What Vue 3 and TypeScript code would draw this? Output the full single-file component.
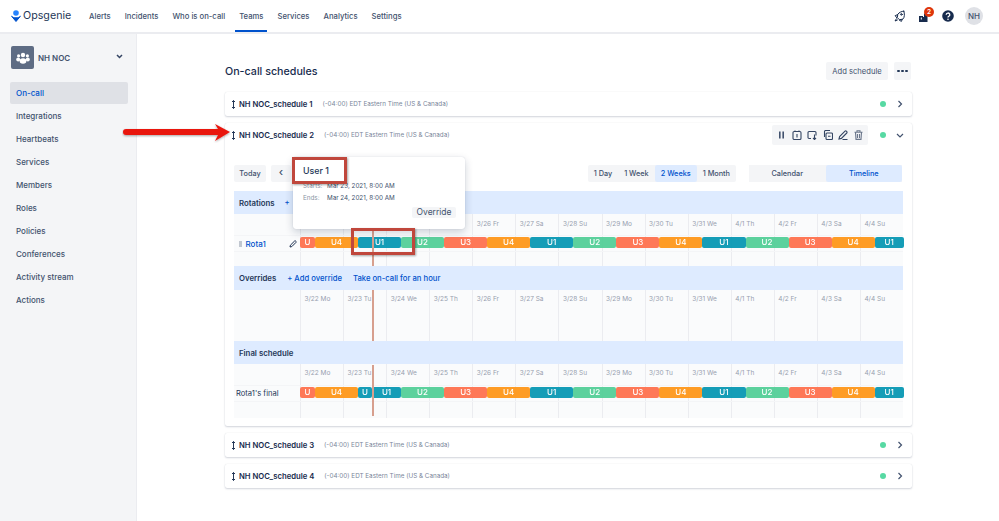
<script setup lang="ts">
const navItems = ['Alerts', 'Incidents', 'Who is on-call', 'Teams', 'Services', 'Analytics', 'Settings']
const sideItems = ['On-call', 'Integrations', 'Heartbeats', 'Services', 'Members', 'Roles', 'Policies', 'Conferences', 'Activity stream', 'Actions']
const days = ['3/22 Mo', '3/23 Tu', '3/24 We', '3/25 Th', '3/26 Fr', '3/27 Sa', '3/28 Su', '3/29 Mo', '3/30 Tu', '3/31 We', '4/1 Th', '4/2 Fr', '4/3 Sa', '4/4 Su']
const tz = '(-04:00) EDT Eastern Time (US & Canada)'
interface Bar { label: string; color: string; width: number }
const c: Record<string, string> = { U1: '#0e9ab5', U2: '#57d09a', U3: '#ff7452', U4: '#ff991f' }
const tail = (): Bar[] => ['U2', 'U3', 'U4', 'U1', 'U2', 'U3', 'U4', 'U1', 'U2', 'U3', 'U4'].map((u) => ({ label: u, color: c[u], width: 43.07 }))
const rota: Bar[] = [
  { label: 'U', color: c.U3, width: 15 },
  { label: 'U4', color: c.U4, width: 43 },
  { label: 'U1', color: c.U1, width: 43 },
  ...tail(),
  { label: 'U1', color: c.U1, width: 29 },
]
const final: Bar[] = [
  { label: 'U', color: c.U3, width: 15 },
  { label: 'U4', color: c.U4, width: 43 },
  { label: 'U', color: c.U1, width: 14 },
  { label: 'U1', color: c.U1, width: 29 },
  ...tail(),
  { label: 'U1', color: c.U1, width: 29 },
]
</script>

<template>
  <div class="page">
    <header class="topbar">
      <div class="logo">
        <svg width="10" height="12" viewBox="0 0 10 12"><circle cx="5" cy="3" r="2.800" fill="#2684ff" /><path d="M.6 6.200 5 11.500 9.400 6.200 C8 7.600 6.800 7.800 5 7.800 S2 7.600 .6 6.200Z" fill="#0052cc" stroke="#0052cc" stroke-width="1" stroke-linejoin="round" /></svg>
        <span>Opsgenie</span>
      </div>
      <nav class="nav">
        <span v-for="n in navItems" :key="n" class="nav-item" :class="{ active: n === 'Teams' }">{{ n }}</span>
      </nav>
      <div class="top-icons">
        <svg width="11" height="12" viewBox="0 0 11 12" fill="none" stroke="#172b4d" stroke-width="1" stroke-linejoin="round" stroke-linecap="round"><path d="M9.800 1.200C7.500 1.300 5.200 2.300 3.800 4.300L3.300 7.600 5.400 9.700 8.700 9.200C10.700 7.800 10.800 3.500 9.800 1.200Z" /><path d="M3.600 4.700 1.200 5.600 2.600 7.600M8.200 9.400 7.400 11.400 5.400 10.200M2.400 8.800 1 11 3.400 10" /><circle cx="7.400" cy="4.400" r=".8" /></svg>
        <div class="notif">
          <svg width="9" height="10" viewBox="0 0 9 10"><path d="M0 4h4v1h1V1.500h3.500V10H0z" fill="#172b4d" /><path d="M1.800 5.500v2h1v-2z" fill="#fff" /></svg>
          <span class="badge">2</span>
        </div>
        <svg width="12" height="12" viewBox="0 0 12 12"><circle cx="6" cy="6" r="5.800" fill="#172b4d" /><path d="M4.200 4.700A1.800 1.700 0 1 1 6.700 6.300C6.100 6.700 6 7 6 7.500" fill="none" stroke="#fff" stroke-width="1.300" /><circle cx="6" cy="9.200" r=".8" fill="#fff" /></svg>
        <div class="avatar">NH</div>
      </div>
    </header>

    <div class="body">
      <aside class="sidebar">
        <div class="team">
          <div class="team-icon">
            <svg width="14" height="12" viewBox="0 0 14 12" fill="#fff"><circle cx="7" cy="3" r="2.200" /><circle cx="2.600" cy="3.800" r="1.600" /><circle cx="11.400" cy="3.800" r="1.600" /><ellipse cx="7" cy="9" rx="3.400" ry="2.800" /><ellipse cx="2.200" cy="7.600" rx="2" ry="2" /><ellipse cx="11.800" cy="7.600" rx="2" ry="2" /></svg>
          </div>
          <span class="team-name">NH NOC</span>
          <svg class="team-chev" width="7" height="5" viewBox="0 0 7 5" fill="none" stroke="#344563" stroke-width="1.500"><path d="M1 1l2.500 2.500L6 1" /></svg>
        </div>
        <div v-for="s in sideItems" :key="s" class="side-item" :class="{ current: s === 'On-call' }">{{ s }}</div>
      </aside>

      <main class="main">
        <div class="title-row">
          <h1>On-call schedules</h1>
          <div class="title-actions">
            <span class="btn add">Add schedule</span>
            <span class="btn more"><i /><i /><i /></span>
          </div>
        </div>

        <section class="card collapsed">
          <svg class="sort" width="5" height="9" viewBox="0 0 5 9" fill="none" stroke="#253858" stroke-width="1"><path d="M2.500 .5v8M1 2l1.500-1.500L4 2M1 7l1.500 1.500L4 7" /></svg>
          <b>NH NOC_schedule 1</b><span class="tz">{{ tz }}</span>
          <i class="dot" />
          <svg class="chev" width="5" height="8" viewBox="0 0 5 8" fill="none" stroke="#42526e" stroke-width="1.200"><path d="M1 1l3 3-3 3" /></svg>
        </section>

        <section class="card open">
          <div class="open-head">
            <svg class="sort" width="5" height="9" viewBox="0 0 5 9" fill="none" stroke="#253858" stroke-width="1"><path d="M2.500 .5v8M1 2l1.500-1.500L4 2M1 7l1.500 1.500L4 7" /></svg>
            <b>NH NOC_schedule 2</b><span class="tz">{{ tz }}</span>
            <div class="tools">
              <svg width="9" height="10" viewBox="0 0 9 10" fill="#42526e"><path d="M2 1.500h1.600v7H2zM5.400 1.500H7v7H5.400z" /></svg>
              <svg width="10" height="10" viewBox="0 0 10 10" fill="none" stroke="#344563" stroke-width="1.100"><rect x="1" y="1.500" width="8" height="8" rx="1.200" /><path d="M3 .5v1.500M7 .5v1.500M5 4v3.500" /></svg>
              <svg width="10" height="10" viewBox="0 0 10 10" fill="none" stroke="#344563" stroke-width="1.100"><path d="M4 8.500H2a1 1 0 0 1-1-1v-5a1 1 0 0 1 1-1h6a1 1 0 0 1 1 1v3M7.500 4.500v5M6 8l1.500 1.500L9 8" /></svg>
              <svg width="10" height="10" viewBox="0 0 10 10" fill="none" stroke="#344563" stroke-width="1.100"><rect x="3" y="3" width="6.500" height="6.500" rx="1" /><path d="M1.500 7V1.500a1 1 0 0 1 1-1H7M5 6.300h2.500" /></svg>
              <svg width="10" height="10" viewBox="0 0 10 10" fill="none" stroke="#344563" stroke-width="1.100"><path d="M1 9l.6-2.400L7 1.200a.9.9 0 0 1 1.300 0l.5.5a.9.9 0 0 1 0 1.300L3.400 8.400 1 9ZM4.500 9.500h5" /></svg>
              <svg width="9" height="10" viewBox="0 0 9 10" fill="none" stroke="#6b778c" stroke-width="1.100"><path d="M.5 2.200h8M3 2V.8h3V2M1.500 2.400l.5 7h5l.5-7M3.500 4v4M5.500 4v4" /></svg>
            </div>
            <i class="dot" />
            <svg class="chev" width="8" height="5" viewBox="0 0 8 5" fill="none" stroke="#42526e" stroke-width="1.200"><path d="M1 1l3 3 3-3" /></svg>
          </div>

          <div class="toolbar">
            <span class="tb-btn">Today</span>
            <span class="tb-btn arrow-btn">‹</span>
            <div class="spacer" />
            <div class="ranges">
              <span class="range">1 Day</span><span class="range">1 Week</span><span class="range on">2 Weeks</span><span class="range">1 Month</span>
            </div>
            <div class="views"><span>Calendar</span><span class="on">Timeline</span></div>
          </div>

          <div class="tl">
            <div class="band"><strong>Rotations</strong><span class="band-link plus">+</span></div>
            <div class="tl-row date-row">
              <div class="lbl" />
              <div class="grid"><div v-for="d in days" :key="d" class="cell">{{ d }}</div></div>
            </div>
            <div class="tl-row bar-row">
              <div class="lbl rota-lbl">
                <span class="grip" /><span class="rota-name">Rota1</span>
                <svg width="8" height="8" viewBox="0 0 8 8" fill="none" stroke="#172b4d" stroke-width="1"><path d="M1 7l.4-1.800L5.600 1a.7.7 0 0 1 1 0l.4.4a.7.7 0 0 1 0 1L2.800 6.600 1 7Z" /></svg>
              </div>
              <div class="grid"><div v-for="d in days" :key="d" class="cell" /></div>
              <div class="bars">
                <span v-for="(b, i) in rota" :key="i" class="bar" :style="{ width: b.width + 'px', background: b.color }">{{ b.label }}</span>
              </div>
            </div>
            <div class="tl-row pad-row">
              <div class="lbl" />
              <div class="grid"><div v-for="d in days" :key="d" class="cell" /></div>
            </div>

            <div class="band ov"><strong>Overrides</strong><span class="band-link">+ Add override</span><span class="band-link second">Take on-call for an hour</span></div>
            <div class="tl-row over-row">
              <div class="lbl" />
              <div class="grid"><div v-for="d in days" :key="d" class="cell">{{ d }}</div></div>
            </div>

            <div class="band"><strong>Final schedule</strong></div>
            <div class="tl-row date-row final-date">
              <div class="lbl" />
              <div class="grid"><div v-for="d in days" :key="d" class="cell">{{ d }}</div></div>
            </div>
            <div class="tl-row bar-row">
              <div class="lbl final-lbl">Rota1's final</div>
              <div class="grid"><div v-for="d in days" :key="d" class="cell" /></div>
              <div class="bars">
                <span v-for="(b, i) in final" :key="i" class="bar" :style="{ width: b.width + 'px', background: b.color }">{{ b.label }}</span>
              </div>
            </div>
            <div class="tl-row pad-row last">
              <div class="lbl" />
              <div class="grid"><div v-for="d in days" :key="d" class="cell" /></div>
            </div>
            <span class="now n1" /><span class="now n2" /><span class="now n3" />
          </div>

          <div class="popup">
            <div class="pop-line"><span>Starts:</span>Mar 23, 2021, 8:00 AM</div>
            <div class="pop-line"><span>Ends:</span>Mar 24, 2021, 8:00 AM</div>
            <div class="pop-foot"><span class="override">Override</span></div>
          </div>
          <div class="mark mark-user">User 1</div>
          <span class="mark mark-bar" />
        </section>

        <section class="card collapsed">
          <svg class="sort" width="5" height="9" viewBox="0 0 5 9" fill="none" stroke="#253858" stroke-width="1"><path d="M2.500 .5v8M1 2l1.500-1.500L4 2M1 7l1.500 1.500L4 7" /></svg>
          <b>NH NOC_schedule 3</b><span class="tz">{{ tz }}</span>
          <i class="dot" />
          <svg class="chev" width="5" height="8" viewBox="0 0 5 8" fill="none" stroke="#42526e" stroke-width="1.200"><path d="M1 1l3 3-3 3" /></svg>
        </section>
        <section class="card collapsed">
          <svg class="sort" width="5" height="9" viewBox="0 0 5 9" fill="none" stroke="#253858" stroke-width="1"><path d="M2.500 .5v8M1 2l1.500-1.500L4 2M1 7l1.500 1.500L4 7" /></svg>
          <b>NH NOC_schedule 4</b><span class="tz">{{ tz }}</span>
          <i class="dot" />
          <svg class="chev" width="5" height="8" viewBox="0 0 5 8" fill="none" stroke="#42526e" stroke-width="1.200"><path d="M1 1l3 3-3 3" /></svg>
        </section>
      </main>
    </div>

    <svg class="red-arrow" width="112" height="22" viewBox="0 0 112 22">
      <defs><filter id="s" x="-5%" y="-30%" width="110%" height="170%"><feDropShadow dx="0" dy="1" stdDeviation="1" flood-color="#000" flood-opacity=".35" /></filter></defs>
      <path d="M4 8H96L93 3 108 11 93 20 96 14H4a3 3 0 0 1 0-6Z" fill="#e9150f" filter="url(#s)" />
    </svg>
  </div>
</template>

<style>
html, body { margin: 0; background: #fff; }
</style>

<style scoped>
.page { position: relative; width: 999px; height: 521px; overflow: hidden; font-family: Inter, "Liberation Sans", sans-serif; color: #172b4d; background: #fff; }
.topbar { height: 32px; display: flex; align-items: center; padding-left: 11px; border-bottom: 2px solid #ebecf0; background: #fff; box-sizing: content-box; }
.logo { display: flex; align-items: center; gap: 2px; width: 78px; font-size: 10.700px; color: #253858; margin-top: -1px; }
.nav { display: flex; gap: 14px; height: 32px; font-size: 7.700px; font-weight: 500; color: #42526e; }
.nav-item { position: relative; display: flex; align-items: center; padding-top: 1px; }
.nav-item.active::after { content: ""; position: absolute; left: -4px; right: -4px; bottom: 0; height: 2px; background: #0052cc; }
.top-icons { margin-left: auto; display: flex; align-items: center; padding-right: 16px; gap: 14px; }
.notif { position: relative; display: flex; margin-top: 2px; }
.badge { position: absolute; left: 5px; top: -5px; width: 10px; height: 10px; border-radius: 50%; background: #de350b; color: #fff; font-size: 6.500px; font-weight: 600; line-height: 10px; text-align: center; }
.avatar { width: 18px; height: 18px; margin-left: -3px; border-radius: 50%; background: #dfe1e6; color: #42526e; font-size: 8px; font-weight: 500; line-height: 18px; text-align: center; }

.body { display: flex; height: 487px; }
.sidebar { width: 137px; flex: none; padding: 12px 8px 0 10px; box-sizing: border-box; background: #f4f5f7; border-right: 1px solid #ebecf0; }
.team { display: flex; align-items: center; height: 23px; padding-left: 1px; margin-bottom: 13px; }
.team-icon { width: 23px; height: 23px; border-radius: 2px; background: #5e6c84; display: flex; align-items: center; justify-content: center; }
.team-name { margin-left: 4px; font-size: 8px; font-weight: 600; color: #42526e; }
.team-chev { margin: -3px 5px 0 auto; }
.side-item { height: 23px; line-height: 23px; padding-left: 6px; font-size: 8px; font-weight: 500; color: #42526e; }
.side-item.current { background: #dfe1e6; color: #0052cc; border-radius: 2px; height: 22px; line-height: 22px; margin-bottom: 1px; }

.main { flex: 1; padding: 28px 87px 0 88px; min-width: 0; }
.title-row { display: flex; align-items: center; justify-content: space-between; height: 18px; margin-bottom: 12px; }
h1 { margin: 0; font-size: 10.700px; font-weight: 500; color: #172b4d; }
.title-actions { display: flex; gap: 6px; padding-right: 1px; }
.btn { height: 18px; border-radius: 2px; background: #f4f5f7; display: flex; align-items: center; justify-content: center; font-size: 7.600px; color: #42526e; }
.add { width: 62px; }
.more { width: 17px; gap: 1.500px; }
.more i { width: 2.500px; height: 2.500px; border-radius: 50%; background: #253858; }

.card { position: relative; background: #fff; border-radius: 2px; box-shadow: 0 1px 2px rgba(9, 30, 66, .18), 0 0 1px rgba(9, 30, 66, .12); margin-bottom: 7px; }
.collapsed, .open-head { display: flex; align-items: center; height: 24px; padding: 0 8px 0 6px; font-size: 8px; }
.open { padding-bottom: 8px; }
.sort { margin-right: 3px; }
b { font-weight: 600; font-size: 7.700px; color: #172b4d; white-space: nowrap; }
.tz { margin-left: 10px; font-size: 6.300px; color: #7a869a; white-space: nowrap; }
.dot { width: 6px; height: 6px; border-radius: 50%; background: #57d9a3; margin-left: auto; margin-right: 10px; }
.tools + .dot { margin-left: 12px; }
.chev { width: 8px; }
.tools { margin-left: auto; display: flex; align-items: center; justify-content: space-between; width: 96px; height: 20px; padding: 0 5px; box-sizing: border-box; border-radius: 2px; background: #f4f5f7; }

.toolbar { display: flex; align-items: center; height: 17px; margin: 18px 9px 9px; font-size: 7.300px; color: #42526e; }
.tb-btn { background: #f4f5f7; height: 17px; line-height: 17px; border-radius: 2px; width: 32px; text-align: center; font-weight: 500; }
.arrow-btn { margin-left: 5px; width: 20px; font-size: 11px; line-height: 15px; }
.spacer { flex: 1; }
.ranges { display: flex; margin-right: 13px; font-weight: 500; background: #f4f5f7; border-radius: 2px; }
.range { height: 17px; line-height: 17px; padding: 0 6px; border-radius: 2px; white-space: nowrap; }
.range.on { background: #deebff; color: #0052cc; }
.views { display: flex; width: 153px; height: 17px; margin-right: 1px; font-weight: 500; background: #f4f5f7; }
.views span { flex: 1; text-align: center; line-height: 17px; border-radius: 2px; }
.views .on { background: #deebff; color: #0052cc; }

.tl { position: relative; margin: 0 9px; width: 669px; background: #fafbfc; }
.band { height: 23px; background: #deebff; display: flex; align-items: center; padding-left: 5px; font-size: 7.800px; color: #172b4d; }
.band strong { font-weight: 600; color: #253858; }
.band.ov { height: 24px; }
.band-link { margin-left: 11px; color: #0052cc; font-weight: 500; font-size: 7.700px; }
.band-link.plus { margin-left: 10px; }
.tl-row { position: relative; display: flex; background: #fafbfc; }
.lbl { width: 66px; flex: none; display: flex; align-items: center; box-sizing: border-box; }
.grid { flex: 1; display: grid; grid-template-columns: repeat(14, 1fr); }
.cell { border-left: 1px solid #ebecf0; padding: 5px 0 0 3.500px; font-size: 6.500px; line-height: 10px; color: #97a0af; white-space: nowrap; overflow: hidden; }
.date-row { height: 21px; }
.final-date .cell { padding-top: 4px; }
.over-row .cell { padding-top: 3.500px; }
.bar-row { height: 15px; border-top: 1px solid #f4f5f7; border-bottom: 1px solid #f4f5f7; }
.pad-row { height: 14px; }
.pad-row.last { height: 16px; }
.over-row { height: 51px; }
.rota-lbl { padding-left: 5px; font-size: 8px; }
.grip { width: 2.500px; height: 6px; background: #c1c7d0; margin-right: 4px; }
.rota-name { color: #0052cc; font-weight: 500; width: 43px; }
.final-lbl { padding-left: 2px; font-size: 7.600px; color: #253858; }
.bars { position: absolute; left: 66px; top: 1px; display: flex; height: 11px; }
.bar { display: block; height: 11px; line-height: 11px; border-radius: 2px; color: #fff; font-size: 8px; font-weight: 500; text-align: center; opacity: .97; }

.now { position: absolute; left: 138px; width: 2px; background: #d79f8e; z-index: 1; }
.n1 { top: 23px; height: 52px; }
.n2 { top: 99px; height: 51px; }
.n3 { top: 174px; height: 51px; }

.popup { position: absolute; left: 68px; top: 34px; width: 172px; height: 72px; box-sizing: border-box; padding: 24px 9px 0 10px; background: #fff; border-radius: 3px; box-shadow: 0 3px 9px rgba(9, 30, 66, .2), 0 0 1px rgba(9, 30, 66, .2); z-index: 3; font-size: 6.300px; color: #42526e; }
.pop-line { height: 11.500px; line-height: 11.500px; }
.pop-line span { display: inline-block; width: 24px; color: #8993a4; }
.pop-foot { display: flex; justify-content: flex-end; margin-top: 3px; }
.override { width: 44px; height: 11px; line-height: 11px; text-align: center; background: #f4f5f7; font-size: 8.500px; border-radius: 2px; }
.mark { position: absolute; box-sizing: border-box; border: 3px solid #c0473c; box-shadow: 1px 1px 2px rgba(0, 0, 0, .35); z-index: 4; }
.mark-user { left: 67px; top: 34px; width: 55px; height: 27px; padding-left: 8px; background: #fff; font-size: 8.800px; font-weight: 500; line-height: 22px; color: #253858; }
.mark-bar { left: 126px; top: 105px; width: 64px; height: 27px; }

.red-arrow { position: absolute; left: 122px; top: 121px; z-index: 5; }
</style>
